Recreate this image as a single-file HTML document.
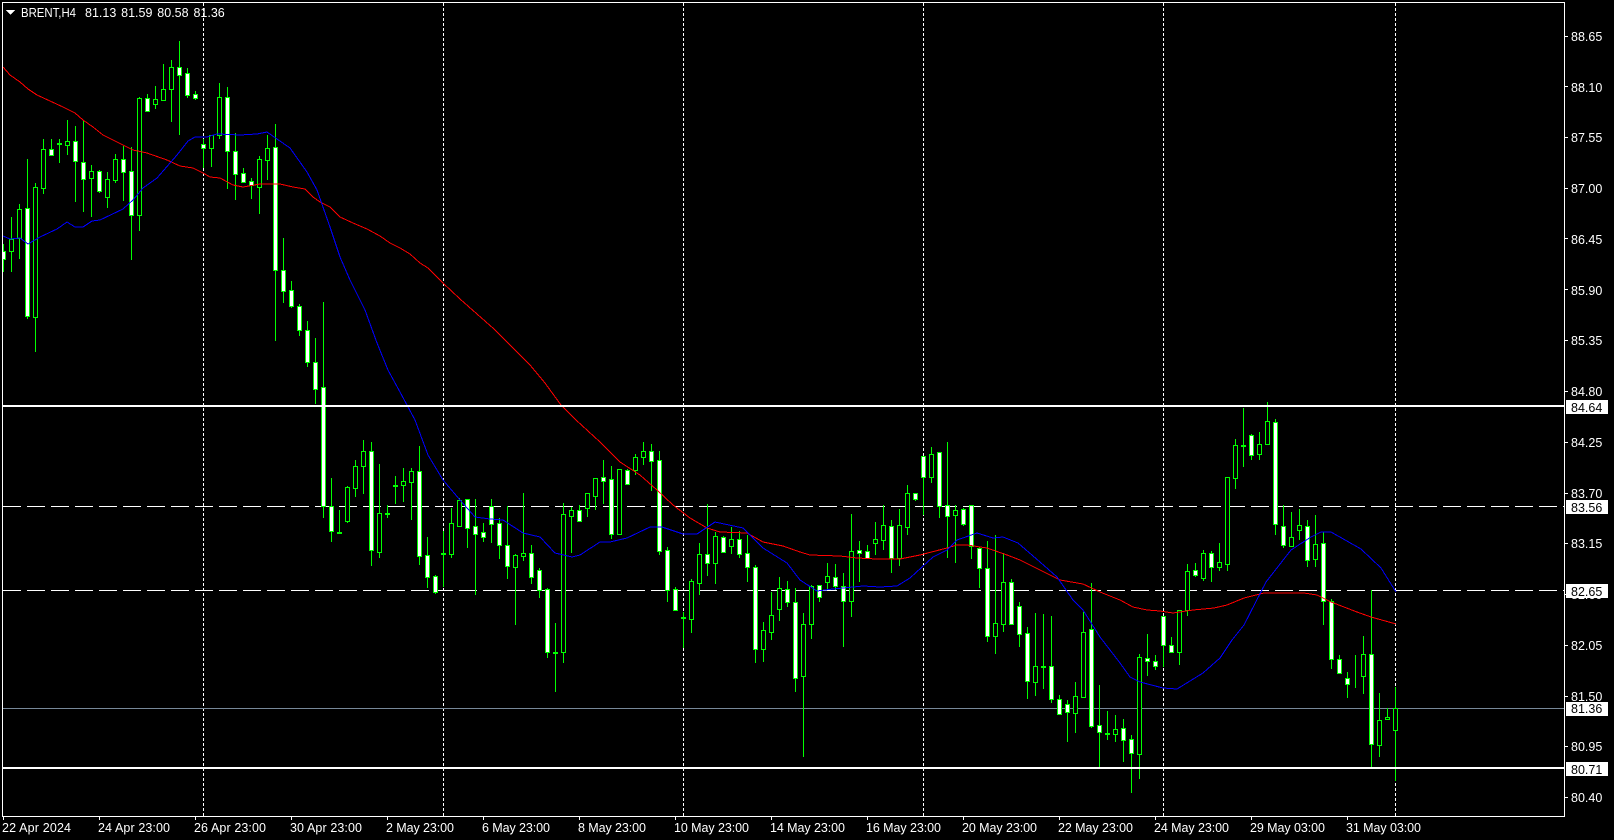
<!DOCTYPE html>
<html>
<head>
<meta charset="utf-8">
<title>BRENT,H4</title>
<style>
html,body{margin:0;padding:0;background:#000;width:1614px;height:840px;overflow:hidden}
svg{display:block;position:absolute;left:0;top:0}
text{font-family:"Liberation Sans",sans-serif;font-size:12.5px;fill:#fff}
.k{fill:#000}
</style>
</head>
<body>
<svg width="1614" height="840" viewBox="0 0 1614 840" xmlns="http://www.w3.org/2000/svg">
<rect width="1614" height="840" fill="#000"/>
<g shape-rendering="crispEdges">
<!-- vertical dotted -->
<path d="M203.5 3V816M443.5 3V816M683.5 3V816M923.5 3V816M1163.5 3V816M1395.5 3V816" stroke="#fff" stroke-width="1" stroke-dasharray="3 2" fill="none"/>
<!-- horizontal -->
<path d="M3 506.5H1564M3 590.5H1564" stroke="#fff" stroke-width="1" stroke-dasharray="18 6" fill="none"/>
<path d="M3 708.5H1564" stroke="#778899" stroke-width="1" fill="none"/>
<!-- wicks -->
<path stroke="#00ff00" stroke-width="1" fill="none" d="M3.5 244V272M11.5 217V272M19.5 204V259M27.5 159V319M35.5 183V352M43.5 139V194M51.5 139V155M59.5 139V163M67.5 120V155M75.5 126V202M83.5 121V212M91.5 165V217M99.5 170V193M107.5 172V208M115.5 154V183M123.5 146V201M131.5 147V260M139.5 97V231M147.5 94V112M155.5 86V109M163.5 64V101M171.5 60V122M179.5 41V135M187.5 68V98M195.5 91V100M203.5 139V168M211.5 135V167M219.5 83V139M227.5 87V189M235.5 133V200M243.5 168V183M251.5 178V199M259.5 156V214M267.5 135V180M275.5 124V341M283.5 238V303M291.5 281V308M299.5 304V336M307.5 321V367M315.5 338V404M323.5 302V518M331.5 478V542M339.5 510V533M347.5 486V523M355.5 460V497M363.5 440V494M371.5 442V566M379.5 464V558M387.5 505V518M395.5 476V504M403.5 468V502M411.5 468V520M419.5 446V565M427.5 537V588M435.5 575V594M443.5 531V587M451.5 508V558M459.5 498V526M467.5 499V548M475.5 499V595M483.5 523V542M491.5 499V543M499.5 518V559M507.5 506V579M515.5 554V625M523.5 493V561M531.5 545V584M539.5 568V598M547.5 588V658M555.5 623V692M563.5 503V663M571.5 507V553M579.5 505V521M587.5 493V517M595.5 478V510M603.5 460V504M611.5 466V539M619.5 469V535M627.5 469V485M635.5 454V475M643.5 442V465M651.5 444V491M659.5 451V555M667.5 547V602M675.5 587V611M683.5 612V648M691.5 579V633M699.5 543V595M707.5 504V576M715.5 532V584M723.5 536V553M731.5 527V554M739.5 531V558M747.5 535V582M755.5 565V663M763.5 622V662M771.5 592V640M779.5 577V621M787.5 581V607M795.5 588V692M803.5 613V757M811.5 585V639M819.5 585V602M827.5 563V590M835.5 564V590M843.5 573V647M851.5 514V617M859.5 541V582M867.5 545V558M875.5 522V555M883.5 505V550M891.5 520V573M899.5 509V566M907.5 485V535M915.5 493V501M923.5 456V515M931.5 447V483M939.5 452V518M947.5 442V558M955.5 505V563M963.5 508V526M971.5 505V559M979.5 547V588M987.5 541V642M995.5 535V654M1003.5 553V632M1011.5 579V624M1019.5 602V647M1027.5 627V699M1035.5 613V696M1043.5 614V689M1051.5 616V703M1059.5 695V714M1067.5 700V742M1075.5 682V733M1083.5 612V697M1091.5 583V728M1099.5 685V767M1107.5 711V740M1115.5 715V742M1123.5 719V762M1131.5 735V793M1139.5 654V779M1147.5 634V676M1155.5 655V670M1163.5 616V667M1171.5 637V653M1179.5 610V665M1187.5 564V616M1195.5 563V577M1203.5 550V581M1211.5 551V582M1219.5 543V571M1227.5 477V571M1235.5 439V489M1243.5 408V467M1251.5 434V460M1259.5 432V460M1267.5 402V444M1275.5 419V535M1283.5 505V548M1291.5 512V547M1299.5 509V540M1307.5 520V567M1315.5 515V567M1323.5 532V625M1331.5 599V669M1339.5 655V673M1347.5 672V698M1355.5 655V688M1363.5 636V694M1371.5 590V767M1379.5 693V757M1387.5 708V720M1395.5 687V781"/>
<!-- hollow (bull) bodies -->
<path stroke="#00ff00" stroke-width="1" fill="#000" d="M9.5 239.5h4v12h-4zM17.5 209.5h4v29h-4zM33.5 187.5h4v130h-4zM41.5 149.5h4v39h-4zM65.5 141.5h4v4h-4zM89.5 171.5h4v7h-4zM105.5 179.5h4v18h-4zM113.5 159.5h4v21h-4zM137.5 98.5h4v117h-4zM153.5 99.5h4v5h-4zM161.5 89.5h4v11h-4zM169.5 67.5h4v22h-4zM209.5 135.5h4v13h-4zM217.5 97.5h4v38h-4zM257.5 159.5h4v28h-4zM265.5 148.5h4v12h-4zM345.5 487.5h4v34h-4zM353.5 466.5h4v22h-4zM361.5 451.5h4v15h-4zM377.5 513.5h4v39h-4zM401.5 481.5h4v4h-4zM409.5 471.5h4v11h-4zM449.5 523.5h4v31h-4zM457.5 500.5h4v26h-4zM513.5 555.5h4v12h-4zM521.5 553.5h4v3h-4zM561.5 514.5h4v138h-4zM569.5 510.5h4v6h-4zM585.5 493.5h4v15h-4zM593.5 478.5h4v18h-4zM617.5 469.5h4v65h-4zM633.5 457.5h4v13h-4zM641.5 451.5h4v6h-4zM689.5 581.5h4v38h-4zM697.5 554.5h4v29h-4zM713.5 536.5h4v27h-4zM729.5 539.5h4v7h-4zM761.5 630.5h4v19h-4zM769.5 615.5h4v17h-4zM777.5 588.5h4v21h-4zM801.5 624.5h4v52h-4zM809.5 586.5h4v38h-4zM825.5 576.5h4v6h-4zM849.5 551.5h4v50h-4zM873.5 539.5h4v4h-4zM881.5 525.5h4v15h-4zM897.5 525.5h4v33h-4zM905.5 493.5h4v34h-4zM929.5 454.5h4v23h-4zM953.5 510.5h4v5h-4zM993.5 623.5h4v13h-4zM1001.5 582.5h4v42h-4zM1033.5 666.5h4v16h-4zM1073.5 696.5h4v17h-4zM1081.5 632.5h4v65h-4zM1113.5 729.5h4v5h-4zM1137.5 657.5h4v97h-4zM1177.5 610.5h4v42h-4zM1185.5 571.5h4v39h-4zM1201.5 553.5h4v25h-4zM1217.5 562.5h4v5h-4zM1225.5 477.5h4v87h-4zM1233.5 445.5h4v33h-4zM1257.5 444.5h4v10h-4zM1265.5 421.5h4v23h-4zM1289.5 537.5h4v9h-4zM1297.5 525.5h4v5h-4zM1313.5 544.5h4v15h-4zM1361.5 654.5h4v22h-4zM1377.5 720.5h4v25h-4zM1385.5 717.5h4v2h-4zM1393.5 708.5h4v22h-4z"/>
<!-- white (bear) bodies -->
<path stroke="#00ff00" stroke-width="1" fill="#fff" d="M1.5 251.5h4v8h-4zM25.5 208.5h4v108h-4zM49.5 149.5h4v6h-4zM73.5 141.5h4v20h-4zM81.5 162.5h4v17h-4zM97.5 171.5h4v20h-4zM121.5 159.5h4v13h-4zM129.5 171.5h4v44h-4zM145.5 98.5h4v13h-4zM177.5 67.5h4v8h-4zM185.5 73.5h4v22h-4zM193.5 94.5h4v4h-4zM201.5 144.5h4v4h-4zM225.5 97.5h4v54h-4zM233.5 151.5h4v23h-4zM241.5 173.5h4v9h-4zM249.5 181.5h4v4h-4zM273.5 147.5h4v123h-4zM281.5 270.5h4v21h-4zM289.5 290.5h4v16h-4zM297.5 306.5h4v24h-4zM305.5 330.5h4v32h-4zM313.5 362.5h4v27h-4zM321.5 387.5h4v119h-4zM329.5 506.5h4v25h-4zM369.5 451.5h4v99h-4zM417.5 471.5h4v85h-4zM425.5 555.5h4v22h-4zM433.5 576.5h4v16h-4zM465.5 499.5h4v29h-4zM473.5 526.5h4v8h-4zM481.5 532.5h4v5h-4zM489.5 506.5h4v18h-4zM497.5 523.5h4v22h-4zM505.5 545.5h4v21h-4zM529.5 553.5h4v24h-4zM537.5 570.5h4v20h-4zM545.5 589.5h4v63h-4zM577.5 510.5h4v11h-4zM601.5 477.5h4v4h-4zM609.5 479.5h4v55h-4zM625.5 470.5h4v14h-4zM649.5 451.5h4v10h-4zM657.5 460.5h4v91h-4zM665.5 550.5h4v40h-4zM673.5 589.5h4v21h-4zM705.5 554.5h4v9h-4zM721.5 537.5h4v15h-4zM737.5 539.5h4v15h-4zM745.5 553.5h4v14h-4zM753.5 567.5h4v82h-4zM785.5 589.5h4v13h-4zM793.5 602.5h4v76h-4zM817.5 585.5h4v12h-4zM833.5 577.5h4v9h-4zM841.5 586.5h4v15h-4zM857.5 550.5h4v3h-4zM865.5 551.5h4v7h-4zM889.5 526.5h4v32h-4zM913.5 493.5h4v6h-4zM921.5 456.5h4v21h-4zM937.5 452.5h4v54h-4zM945.5 505.5h4v11h-4zM961.5 509.5h4v15h-4zM969.5 505.5h4v41h-4zM977.5 548.5h4v20h-4zM985.5 568.5h4v68h-4zM1009.5 582.5h4v42h-4zM1017.5 606.5h4v28h-4zM1025.5 633.5h4v48h-4zM1049.5 666.5h4v33h-4zM1057.5 699.5h4v15h-4zM1065.5 704.5h4v8h-4zM1089.5 629.5h4v97h-4zM1097.5 725.5h4v7h-4zM1121.5 728.5h4v12h-4zM1129.5 739.5h4v14h-4zM1145.5 658.5h4v3h-4zM1153.5 661.5h4v5h-4zM1161.5 616.5h4v29h-4zM1169.5 645.5h4v7h-4zM1193.5 570.5h4v5h-4zM1209.5 553.5h4v14h-4zM1249.5 435.5h4v20h-4zM1273.5 422.5h4v102h-4zM1281.5 526.5h4v19h-4zM1305.5 526.5h4v34h-4zM1321.5 543.5h4v58h-4zM1329.5 601.5h4v58h-4zM1337.5 659.5h4v14h-4zM1345.5 678.5h4v6h-4zM1369.5 654.5h4v90h-4z"/>
<!-- doji -->
<path fill="#00ff00" d="M57 143h5v2h-5zM337 532h5v2h-5zM385 513h5v2h-5zM393 485h5v2h-5zM441 553h5v2h-5zM553 652h5v2h-5zM681 617h5v2h-5zM1041 666h5v2h-5zM1105 733h5v2h-5zM1241 445h5v2h-5z"/>
<!-- red MA -->
<polyline fill="none" stroke="#ff0000" stroke-width="1" points="3,67 10,75 20,82 28,89 37,95 50,101 63,107 75,113 83,120 93,127 103,135 117,142 133,150 147,153 167,160 180,166 193,168 203,173 210,177 220,178 233,185 243,187 260,184 280,184 293,187 305,189 313,197 320,202 330,207 340,217 353,223 367,229 380,236 390,243 400,248 410,254 420,263 428,268 443,283 460,299 494,329 530,365 545,383 561,405 576,420 600,442 620,462 640,475 657,490 673,505 690,518 707,528 720,532 747,533 763,542 783,546 800,552 810,555 840,556 857,558 877,559 900,559 920,555 947,548 957,545 967,545 987,548 1007,555 1020,560 1040,570 1060,580 1083,584 1100,592 1120,600 1133,607 1147,610 1160,611 1173,613 1193,610 1214,608 1227,605 1244,598 1264,593 1304,593 1317,595 1331,602 1357,612 1371,617 1396,624"/>
<!-- blue MA -->
<polyline fill="none" stroke="#0000ff" stroke-width="1" points="3,236 10,239 20,238 28,244 40,237 57,229 67,222 75,227 83,227 92,221 100,220 123,209 133,200 143,188 157,178 177,155 188,141 195,137 207,137 217,134 240,135 257,134 267,132 277,139 290,148 307,172 317,190 330,227 340,257 350,280 365,310 377,343 388,370 400,392 415,420 428,455 443,480 460,500 475,517 490,519 503,520 523,533 540,537 555,553 572,557 580,555 600,542 610,542 627,538 650,527 662,527 683,534 697,534 715,522 743,528 763,548 787,563 800,580 817,591 833,589 863,586 880,587 897,586 910,578 933,557 947,550 957,540 977,533 993,538 1003,537 1018,543 1040,562 1057,577 1073,600 1083,610 1100,637 1120,663 1130,677 1140,682 1163,688 1177,689 1203,673 1220,658 1232,640 1244,625 1266,582 1291,550 1311,537 1321,532 1331,532 1361,549 1381,568 1396,592"/>
<!-- thick solid lines on top -->
<rect x="3" y="405" width="1561" height="2" fill="#fff"/>
<rect x="3" y="767" width="1561" height="2" fill="#fff"/>
<!-- frame -->
<rect x="0" y="0" width="2" height="840" fill="#000"/>
<path d="M2.5 2.5H1564.5V816.5H2.5Z" fill="none" stroke="#fff" stroke-width="1"/>
<!-- price ticks -->
<path stroke="#fff" stroke-width="1" fill="none" d="M1565 36.5h3M1565 86.5h3M1565 137.5h3M1565 188.5h3M1565 238.5h3M1565 289.5h3M1565 340.5h3M1565 391.5h3M1565 442.5h3M1565 493.5h3M1565 543.5h3M1565 594.5h3M1565 645.5h3M1565 696.5h3M1565 746.5h3M1565 797.5h3"/>
<!-- time ticks -->
<path stroke="#fff" stroke-width="1" fill="none" d="M3.5 817v3M99.5 817v3M195.5 817v3M291.5 817v3M387.5 817v3M483.5 817v3M579.5 817v3M675.5 817v3M771.5 817v3M867.5 817v3M963.5 817v3M1059.5 817v3M1155.5 817v3M1251.5 817v3M1347.5 817v3"/>
<!-- triangle -->
<polygon points="6,10 15,10 10.5,15" fill="#fff"/>
</g>
<!-- legend -->
<text x="21" y="17" textLength="55" lengthAdjust="spacingAndGlyphs">BRENT,H4</text>
<text x="85" y="17" style="word-spacing:1.4px">81.13 81.59 80.58 81.36</text>
<!-- price labels -->
<text x="1571" y="41">88.65</text>
<text x="1571" y="92">88.10</text>
<text x="1571" y="142">87.55</text>
<text x="1571" y="193">87.00</text>
<text x="1571" y="244">86.45</text>
<text x="1571" y="295">85.90</text>
<text x="1571" y="345">85.35</text>
<text x="1571" y="396">84.80</text>
<text x="1571" y="447">84.25</text>
<text x="1571" y="498">83.70</text>
<text x="1571" y="548">83.15</text>
<text x="1571" y="599">82.60</text>
<text x="1571" y="650">82.05</text>
<text x="1571" y="701">81.50</text>
<text x="1571" y="751">80.95</text>
<text x="1571" y="802">80.40</text>
<!-- boxed labels -->
<rect x="1566" y="400" width="42" height="14" fill="#fff"/><text class="k" x="1571" y="412">84.64</text>
<rect x="1566" y="500" width="42" height="14" fill="#fff"/><text class="k" x="1571" y="512">83.56</text>
<rect x="1566" y="584" width="42" height="14" fill="#fff"/><text class="k" x="1571" y="596">82.65</text>
<rect x="1566" y="702" width="42" height="14" fill="#fff"/><text class="k" x="1571" y="713">81.36</text>
<rect x="1566" y="762" width="42" height="14" fill="#fff"/><text class="k" x="1571" y="774">80.71</text>
<!-- time labels -->
<text x="2" y="832" textLength="69">22 Apr 2024</text>
<text x="98" y="832" textLength="72">24 Apr 23:00</text>
<text x="194" y="832" textLength="72">26 Apr 23:00</text>
<text x="290" y="832" textLength="72">30 Apr 23:00</text>
<text x="386" y="832" textLength="68">2 May 23:00</text>
<text x="482" y="832" textLength="68">6 May 23:00</text>
<text x="578" y="832" textLength="68">8 May 23:00</text>
<text x="674" y="832" textLength="75">10 May 23:00</text>
<text x="770" y="832" textLength="75">14 May 23:00</text>
<text x="866" y="832" textLength="75">16 May 23:00</text>
<text x="962" y="832" textLength="75">20 May 23:00</text>
<text x="1058" y="832" textLength="75">22 May 23:00</text>
<text x="1154" y="832" textLength="75">24 May 23:00</text>
<text x="1250" y="832" textLength="75">29 May 03:00</text>
<text x="1346" y="832" textLength="75">31 May 03:00</text>
</svg>
</body>
</html>
